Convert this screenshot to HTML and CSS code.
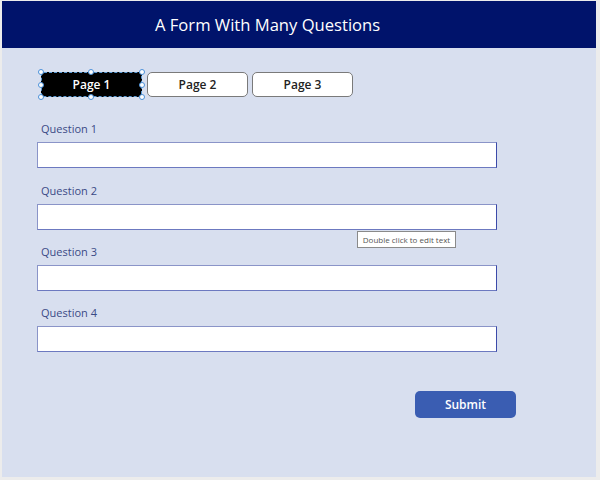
FILE: index.html
```html
<!DOCTYPE html>
<html>
<head>
<meta charset="utf-8">
<link rel="stylesheet" href="styles.css">
</head>
<body>
<div class="canvas">
  <header class="header"><h1 class="title">A Form With Many Questions</h1></header>
  <main class="content">
    <nav class="tabs">
      <div class="tab tab-selected">
        Page 1
        <span class="handle h-tl"></span><span class="handle h-tm"></span><span class="handle h-tr"></span>
        <span class="handle h-ml"></span><span class="handle h-mr"></span>
        <span class="handle h-bl"></span><span class="handle h-bm"></span><span class="handle h-br"></span>
      </div>
      <div class="tab">Page 2</div>
      <div class="tab">Page 3</div>
    </nav>
    <div class="questions">
      <div class="question"><label class="q-label">Question 1</label><div class="q-input"></div></div>
      <div class="question"><label class="q-label">Question 2</label><div class="q-input"></div></div>
      <div class="question"><label class="q-label">Question 3</label><div class="q-input"></div></div>
      <div class="question"><label class="q-label">Question 4</label><div class="q-input"></div></div>
    </div>
    <div class="tooltip">Double click to edit text</div>
    <div class="actions"><button class="submit">Submit</button></div>
  </main>
</div>
</body>
</html>
```
FILE: styles.css
```css
* { box-sizing: border-box; }
html, body { margin: 0; padding: 0; }
body {
  width: 600px;
  height: 480px;
  background: #ececec;
  font-family: "Open Sans", "Noto Sans", sans-serif;
  overflow: hidden;
  padding: 1px 4px 3px 2px;
}
.canvas {
  width: 594px;
  height: 476px;
  background: #d8dfef;
  display: flex;
  flex-direction: column;
}
.header {
  height: 47px;
  background: #00136b;
  display: flex;
  align-items: center;
  padding-left: 153px;
}
.title {
  margin: 0;
  color: #ffffff;
  font-size: 16.6px;
  font-weight: 400;
  line-height: 1;
  padding-top: 1px;
}
.content {
  position: relative;
  flex: 1;
  padding: 24px 0 0 35px;
}
.tabs {
  display: flex;
  gap: 4px;
  padding-left: 4px;
}
.tab {
  position: relative;
  width: 101px;
  height: 25px;
  border: 1px solid #7a7a7a;
  border-radius: 5px;
  background: #ffffff;
  color: #222;
  font-size: 12px;
  font-weight: 600;
  display: flex;
  align-items: center;
  justify-content: center;
}
.tab-selected {
  background: #000000;
  color: #ffffff;
  border: 1px dashed #5b9bd5;
  border-radius: 3px;
  margin-right: 1px;
}
.handle {
  position: absolute;
  width: 6px;
  height: 6px;
  border-radius: 50%;
  background: #ffffff;
  border: 1px solid #4a90d9;
}
.h-tl { left: -4px; top: -4px; }
.h-tm { left: 46px; top: -4px; }
.h-tr { right: -4px; top: -4px; }
.h-ml { left: -4px; top: 9px; }
.h-mr { right: -4px; top: 9px; }
.h-bl { left: -4px; bottom: -4px; }
.h-bm { left: 46px; bottom: -4px; }
.h-br { right: -4px; bottom: -4px; }
.questions {
  margin-top: 24px;
  display: flex;
  flex-direction: column;
  gap: 14px;
}
.question {
  display: flex;
  flex-direction: column;
}
.question:first-child { margin-bottom: 1px; }
.q-label {
  height: 21px;
  padding-left: 4px;
  font-size: 11px;
  line-height: 15px;
  color: #3b4a86;
}
.q-input {
  width: 460px;
  height: 26px;
  background: #ffffff;
  border: 1px solid;
  border-color: #8a94c8 #3b4aa9 #6c79c0 #8a94c8;
}
.tooltip {
  position: absolute;
  left: 355px;
  top: 183px;
  width: 99px;
  height: 17px;
  background: #ffffff;
  border: 1px solid #8a8a8a;
  font-size: 8px;
  line-height: 15px;
  color: #555;
  text-align: center;
  white-space: nowrap;
}
.actions {
  display: flex;
  padding-left: 378px;
  margin-top: 39px;
}
.submit {
  width: 101px;
  height: 27px;
  border: none;
  border-radius: 5px;
  background: #3a5db2;
  color: #ffffff;
  font-family: "Open Sans", "Noto Sans", sans-serif;
  font-size: 12px;
  font-weight: 600;
}
```
